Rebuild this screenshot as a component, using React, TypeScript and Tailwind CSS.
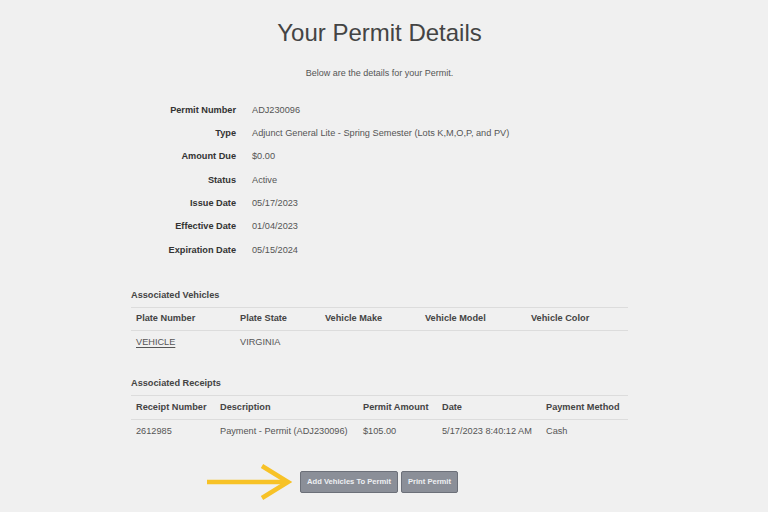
import React from "react";

const details: [string, string][] = [
  ["Permit Number", "ADJ230096"],
  ["Type", "Adjunct General Lite - Spring Semester (Lots K,M,O,P, and PV)"],
  ["Amount Due", "$0.00"],
  ["Status", "Active"],
  ["Issue Date", "05/17/2023"],
  ["Effective Date", "01/04/2023"],
  ["Expiration Date", "05/15/2024"],
];

export default function App() {
  return (
    <div className="w-[768px] h-[512px] bg-[#f0f0f0] overflow-hidden text-[#555]" style={{ fontFamily: '"Liberation Sans", Arial, sans-serif' }}>
      <div className="w-[759px] flex flex-col items-center">
        <h1 className="mt-[18px] text-[24px] leading-[30px] text-[#444]">Your Permit Details</h1>
        <p className="mt-[19px] text-[9px] leading-[12px] text-[#555]">Below are the details for your Permit.</p>
        <div className="w-[497px] mt-[20px]">
          <div className="flex flex-col">
            {details.map(([k, v]) => (
              <div key={k} className="flex items-center h-[23.3px]">
                <div className="w-[105px] text-right font-bold text-[9.2px] text-[#333]">{k}</div>
                <div className="ml-[16px] text-[9.2px] text-[#555]">{v}</div>
              </div>
            ))}
          </div>

          <div className="mt-[27px] font-bold text-[9.2px] text-[#444] leading-[12px]">Associated Vehicles</div>
          <div className="mt-[6px] border-t border-[#dcdcdc]">
            <div className="grid grid-cols-[104px_85px_100px_106px_1fr] items-center h-[23px] pl-[5px] border-b border-[#dcdcdc] font-bold text-[9.2px] text-[#444]">
              <div>Plate Number</div>
              <div>Plate State</div>
              <div>Vehicle Make</div>
              <div>Vehicle Model</div>
              <div>Vehicle Color</div>
            </div>
            <div className="grid grid-cols-[104px_85px_100px_106px_1fr] items-center h-[23px] pl-[5px] text-[9.2px] text-[#555]">
              <div><span className="underline underline-offset-2 decoration-[#555]">VEHICLE</span></div>
              <div>VIRGINIA</div>
              <div></div>
              <div></div>
              <div></div>
            </div>
          </div>

          <div className="mt-[23px] font-bold text-[9.2px] text-[#444] leading-[12px]">Associated Receipts</div>
          <div className="mt-[6px] border-t border-[#dcdcdc]">
            <div className="grid grid-cols-[84px_143px_79px_104px_1fr] items-center h-[24px] pl-[5px] border-b border-[#dcdcdc] font-bold text-[9.2px] text-[#444]">
              <div>Receipt Number</div>
              <div>Description</div>
              <div>Permit Amount</div>
              <div>Date</div>
              <div>Payment Method</div>
            </div>
            <div className="grid grid-cols-[84px_143px_79px_104px_1fr] items-center h-[24px] pl-[5px] text-[9.2px] text-[#555]">
              <div>2612985</div>
              <div>Payment - Permit (ADJ230096)</div>
              <div>$105.00</div>
              <div>5/17/2023 8:40:12 AM</div>
              <div>Cash</div>
            </div>
          </div>
        </div>

        <div className="mt-[20px] w-full flex items-center">
          <div className="ml-[205px] w-[88px] h-[36px] flex items-center">
            <svg width="88" height="36" viewBox="0 0 88 36">
              <line x1="2" y1="18" x2="82" y2="18" stroke="#f7c227" strokeWidth="4.5" />
              <polyline points="57,2 83,18 57,34" fill="none" stroke="#f7c227" strokeWidth="4.5" strokeLinejoin="miter" />
            </svg>
          </div>
          <div className="ml-[7px] flex gap-[3px]">
            <button className="h-[22px] w-[98px] rounded-[2px] bg-[#8b8f98] border border-[#6c7079] text-[7.6px] font-bold text-[#eef0f3]">Add Vehicles To Permit</button>
            <button className="h-[22px] w-[57px] rounded-[2px] bg-[#8b8f98] border border-[#6c7079] text-[7.6px] font-bold text-[#eef0f3]">Print Permit</button>
          </div>
        </div>
      </div>
    </div>
  );
}
